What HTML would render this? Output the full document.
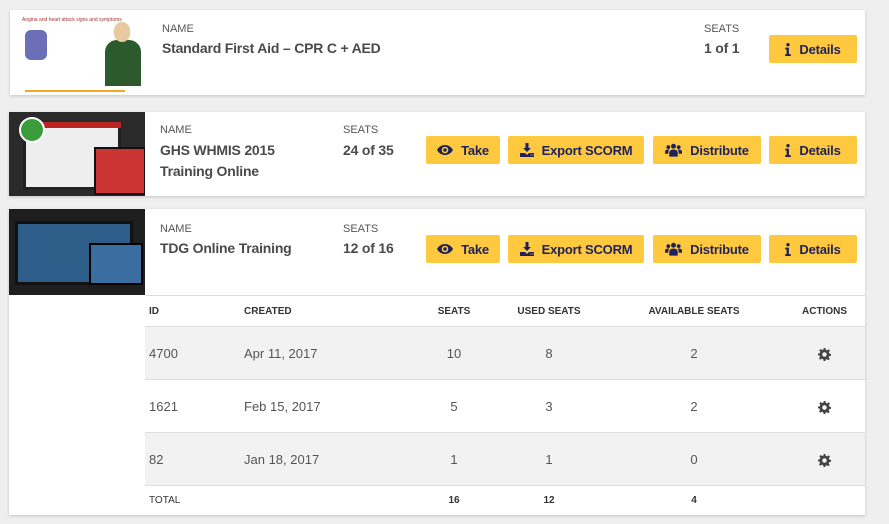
<!DOCTYPE html>
<html><head><style>
body{margin:0;width:889px;height:524px;background:#efefef;font-family:"Liberation Sans",sans-serif;color:#444;position:relative;overflow:hidden}
.card{position:absolute;background:#fff;box-shadow:0 1px 3px rgba(0,0,0,.18)}
.abs{position:absolute}
.lbl{font-size:11px;color:#555}
.ttl{font-size:14px;font-weight:bold;color:#4a4a4a;line-height:21px;letter-spacing:-0.2px}
.btn{position:absolute;height:28px;background:#fec93e;border-radius:2px;color:#1f215c;font-size:13px;font-weight:bold;display:flex;align-items:center;justify-content:center;gap:8px;letter-spacing:-0.2px}
.btn svg{fill:#1f215c}
.thumb{position:absolute;overflow:hidden}
th,td{padding:0}
.tb{position:absolute;left:145px;top:296px;width:720px;border-collapse:collapse;font-size:13px;color:#555}
.tb th{font-size:10px;font-weight:bold;color:#333;height:30px;text-align:left;border-bottom:1px solid #ddd}
.tb td{height:52px;border-bottom:1px solid #ddd}
.tb td svg{vertical-align:middle}
.tb tr.g td{background:#f2f2f2}
.c{text-align:center!important}
.tot td{height:29px;font-size:10px;font-weight:bold;color:#333;border:none}
</style></head><body>
<svg width="0" height="0" style="position:absolute">
<defs>
<symbol id="eye" viewBox="0 0 16 10"><path d="M8 0C4 0 1 3 0 5c1 2 4 5 8 5s7-3 8-5C15 3 12 0 8 0zm0 8.3A3.3 3.3 0 1 1 8 1.7a3.3 3.3 0 0 1 0 6.6zM8 3.3a1.7 1.7 0 1 0 0 3.4 1.7 1.7 0 0 0 0-3.4z"/></symbol>
<symbol id="dl" viewBox="0 0 14 14"><path d="M5.5 0h3v5h2.5L7 9 3 5h2.5zM0 10h5l2 2 2-2h5v4H0zm10.5 1.5v1h1v-1zm2 0v1h1v-1z"/></symbol>
<symbol id="grp" viewBox="0 0 18 14"><circle cx="9" cy="3" r="2.6"/><circle cx="3.5" cy="4" r="2"/><circle cx="14.5" cy="4" r="2"/><path d="M4.5 14V10c0-2 2-3.5 4.5-3.5S13.5 8 13.5 10v4zM0 11V9c0-1.5 1.2-2.5 3.5-2.5 .7 0 1 .1 1.3.2C3.8 7.5 3.5 8.5 3.5 10v1zM18 11V9c0-1.5-1.2-2.5-3.5-2.5-.7 0-1 .1-1.3.2.9.8 1.3 1.8 1.3 3.3v1z"/></symbol>
<symbol id="inf" viewBox="0 0 6 14"><circle cx="3" cy="1.8" r="1.8"/><path d="M0 5h4v7h2v2H0v-2h1.5V7H0z"/></symbol>
<symbol id="gear" viewBox="0 0 14 14"><path d="M6 0h2l.4 2 1.4.6L11.5 1.4 12.9 2.8 11.7 4.5l.6 1.5 1.7.3v2l-1.9.4-.6 1.4 1.1 1.7-1.4 1.4-1.7-1.1-1.5.6L8 14H6l-.4-1.9-1.4-.6-1.7 1.1-1.4-1.4 1.1-1.7-.6-1.4L0 8V6l1.9-.4.6-1.5L1.4 2.5 2.8 1.1l1.7 1.1L6 1.6zM7 4.6a2.4 2.4 0 1 0 0 4.8 2.4 2.4 0 0 0 0-4.8z" fill="#444" fill-rule="evenodd"/></symbol>
</defs></svg>
<div class="card" style="left:10px;top:10px;width:855px;height:85px">
 <div class="thumb" style="left:7px;top:0;width:124px;height:82px;background:#fff">
  <div class="abs" style="left:5px;top:7px;font-size:5px;color:#a33">Angina and heart attack signs and symptoms</div>
  <div class="abs" style="left:8px;top:20px;width:22px;height:30px;background:#6a6fb8;border-radius:6px"></div>
  <div class="abs" style="left:88px;top:30px;width:36px;height:46px;background:#2d5a2d;border-radius:12px 12px 0 0"></div>
  <div class="abs" style="left:97px;top:12px;width:16px;height:20px;background:#e8c9a0;border-radius:8px"></div>
  <div class="abs" style="left:8px;top:80px;width:100px;height:2px;background:#f5a623"></div>
 </div>
 <div class="abs lbl" style="left:152px;top:13px">NAME</div>
 <div class="abs ttl" style="left:152px;top:28px">Standard First Aid – CPR C + AED</div>
 <div class="abs lbl" style="left:694px;top:13px">SEATS</div>
 <div class="abs ttl" style="left:694px;top:28px">1 of 1</div>
 <div class="btn" style="left:759px;top:25px;width:88px"><svg width="6" height="13"><use href="#inf"/></svg>Details</div>
</div>
<div class="card" style="left:9px;top:112px;width:856px;height:84px">
 <div class="thumb" style="left:0;top:0;width:136px;height:84px;background:#2a2a2a">
  <div class="abs" style="left:14px;top:10px;width:92px;height:62px;background:#eee;border:3px solid #222"></div>
  <div class="abs" style="left:14px;top:10px;width:98px;height:6px;background:#b22"></div>
  <div class="abs" style="left:85px;top:35px;width:48px;height:44px;background:#c33;border:2px solid #111"></div>
  <div class="abs" style="left:10px;top:5px;width:22px;height:22px;border-radius:50%;background:#3a9c3a;border:2px solid #fff"></div>
 </div>
 <div class="abs lbl" style="left:151px;top:12px">NAME</div>
 <div class="abs ttl" style="left:151px;top:28px">GHS WHMIS 2015<br>Training Online</div>
 <div class="abs lbl" style="left:334px;top:12px">SEATS</div>
 <div class="abs ttl" style="left:334px;top:28px">24 of 35</div>
</div>
<div class="card" style="left:9px;top:209px;width:856px;height:306px">
 <div class="thumb" style="left:0;top:0;width:136px;height:86px;background:#1e1e1e">
  <div class="abs" style="left:6px;top:12px;width:112px;height:58px;background:#2f5d8a;border:3px solid #111"></div>
  <div class="abs" style="left:80px;top:34px;width:50px;height:38px;background:#3a6ea0;border:2px solid #000"></div>
 </div>
 <div class="abs lbl" style="left:151px;top:14px">NAME</div>
 <div class="abs ttl" style="left:151px;top:29px">TDG Online Training</div>
 <div class="abs lbl" style="left:334px;top:14px">SEATS</div>
 <div class="abs ttl" style="left:334px;top:29px">12 of 16</div>
</div>
<div class="btn" style="left:426px;top:136px;width:74px"><svg width="16" height="10"><use href="#eye"/></svg>Take</div>
<div class="btn" style="left:508px;top:136px;width:136px"><svg width="14" height="14"><use href="#dl"/></svg>Export SCORM</div>
<div class="btn" style="left:653px;top:136px;width:108px"><svg width="17" height="14"><use href="#grp"/></svg>Distribute</div>
<div class="btn" style="left:769px;top:136px;width:88px"><svg width="6" height="13"><use href="#inf"/></svg>Details</div>
<div class="btn" style="left:426px;top:235px;width:74px"><svg width="16" height="10"><use href="#eye"/></svg>Take</div>
<div class="btn" style="left:508px;top:235px;width:136px"><svg width="14" height="14"><use href="#dl"/></svg>Export SCORM</div>
<div class="btn" style="left:653px;top:235px;width:108px"><svg width="17" height="14"><use href="#grp"/></svg>Distribute</div>
<div class="btn" style="left:769px;top:235px;width:88px"><svg width="6" height="13"><use href="#inf"/></svg>Details</div>
<div class="abs" style="left:145px;top:295px;width:720px;height:1px;background:#ddd"></div>
<table class="tb">
<colgroup><col style="width:99px"><col style="width:170px"><col style="width:80px"><col style="width:110px"><col style="width:180px"><col></colgroup>
<tr><th style="padding-left:4px">ID</th><th>CREATED</th><th class="c">SEATS</th><th class="c">USED SEATS</th><th class="c">AVAILABLE SEATS</th><th class="c">ACTIONS</th></tr>
<tr class="g"><td style="padding-left:4px">4700</td><td>Apr 11, 2017</td><td class="c">10</td><td class="c">8</td><td class="c">2</td><td class="c"><svg width="13" height="13"><use href="#gear"/></svg></td></tr>
<tr><td style="padding-left:4px">1621</td><td>Feb 15, 2017</td><td class="c">5</td><td class="c">3</td><td class="c">2</td><td class="c"><svg width="13" height="13"><use href="#gear"/></svg></td></tr>
<tr class="g"><td style="padding-left:4px">82</td><td>Jan 18, 2017</td><td class="c">1</td><td class="c">1</td><td class="c">0</td><td class="c"><svg width="13" height="13"><use href="#gear"/></svg></td></tr>
<tr class="tot"><td style="padding-left:4px;font-weight:normal">TOTAL</td><td></td><td class="c">16</td><td class="c">12</td><td class="c">4</td><td></td></tr>
</table>
</body></html>
